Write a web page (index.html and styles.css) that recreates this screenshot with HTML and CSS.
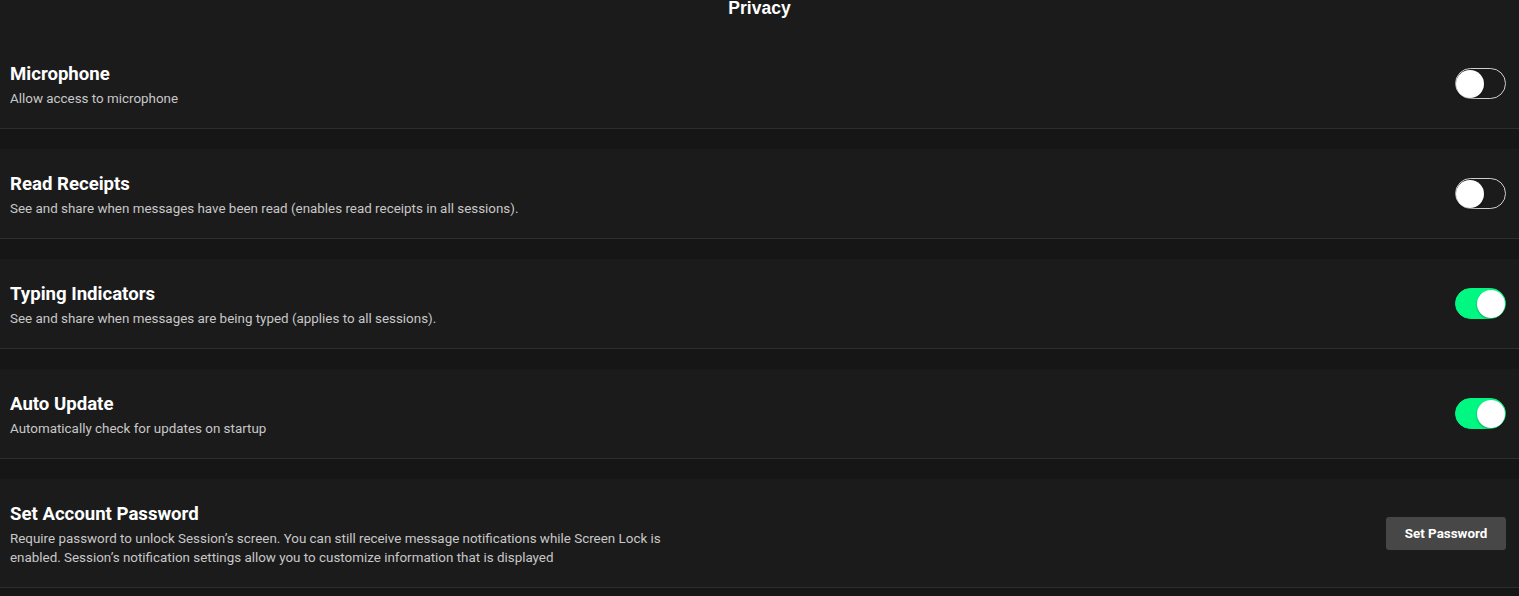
FILE: index.html
```html
<!DOCTYPE html>
<html lang="en">
<head>
<meta charset="utf-8">
<title>Privacy</title>
<link rel="stylesheet" href="styles.css">
</head>
<body>
<div class="page">
  <h1 class="page-title">Privacy</h1>
  <div class="settings">
    <div class="row">
      <div class="text">
        <div class="row-title">Microphone</div>
        <div class="row-desc">Allow access to microphone</div>
      </div>
      <div class="toggle"><span class="knob"></span></div>
    </div>
    <div class="row">
      <div class="text">
        <div class="row-title">Read Receipts</div>
        <div class="row-desc">See and share when messages have been read (enables read receipts in all sessions).</div>
      </div>
      <div class="toggle"><span class="knob"></span></div>
    </div>
    <div class="row">
      <div class="text">
        <div class="row-title">Typing Indicators</div>
        <div class="row-desc">See and share when messages are being typed (applies to all sessions).</div>
      </div>
      <div class="toggle on"><span class="knob"></span></div>
    </div>
    <div class="row">
      <div class="text">
        <div class="row-title">Auto Update</div>
        <div class="row-desc">Automatically check for updates on startup</div>
      </div>
      <div class="toggle on"><span class="knob"></span></div>
    </div>
    <div class="row">
      <div class="text narrow">
        <div class="row-title">Set Account Password</div>
        <div class="row-desc">Require password to unlock Session’s screen. You can still receive message notifications while Screen Lock is enabled. Session’s notification settings allow you to customize information that is displayed</div>
      </div>
      <button class="btn">Set Password</button>
    </div>
  </div>
</div>
</body>
</html>
```

FILE: styles.css
```css
html, body {
  margin: 0;
  padding: 0;
  background: #161616;
  height: 100%;
  overflow: hidden;
}
.page {
  font-family: Roboto, "Liberation Sans", sans-serif;
  color: #ffffff;
}
.page-title {
  margin: 0;
  padding: 0 0 22px;
  background: #1b1b1b;
  font-family: "Liberation Sans", Arial, sans-serif;
  font-size: 17.5px;
  line-height: 17px;
  font-weight: 700;
  text-align: center;
}
.settings {
  display: flex;
  flex-direction: column;
  gap: 20px;
}
.row {
  display: flex;
  align-items: center;
  justify-content: space-between;
  background: #1b1b1b;
  border-bottom: 1px solid #2e2e2e;
  padding: 0 13px 0 10px;
}
.text {
  padding: 25px 0 20px;
}
.text.narrow {
  max-width: 690px;
}
.row-title {
  font-size: 18.6px;
  line-height: 21px;
  font-weight: 700;
  color: #ffffff;
}
.row-desc {
  margin-top: 4px;
  font-size: 13.4px;
  line-height: 19px;
  color: #c8c8c8;
}
.toggle {
  box-sizing: border-box;
  width: 51px;
  height: 31px;
  border: 1px solid #cfcfcf;
  border-radius: 16px;
  display: flex;
  align-items: center;
  justify-content: flex-start;
  padding: 0 1px 0 0;
  flex-shrink: 0;
}
.toggle .knob {
  width: 28px;
  height: 28px;
  border-radius: 50%;
  background: #ffffff;
  box-shadow: 0 1px 2px rgba(0,0,0,0.35);
}
.toggle.on {
  background: #00f782;
  border-color: #00f782;
  justify-content: flex-end;
  padding: 0;
}
.btn {
  width: 120px;
  height: 33px;
  border: none;
  border-radius: 3px;
  background: #474747;
  color: #ffffff;
  font-family: Roboto, "Liberation Sans", sans-serif;
  font-size: 13.4px;
  font-weight: 700;
  flex-shrink: 0;
  cursor: pointer;
}
```
